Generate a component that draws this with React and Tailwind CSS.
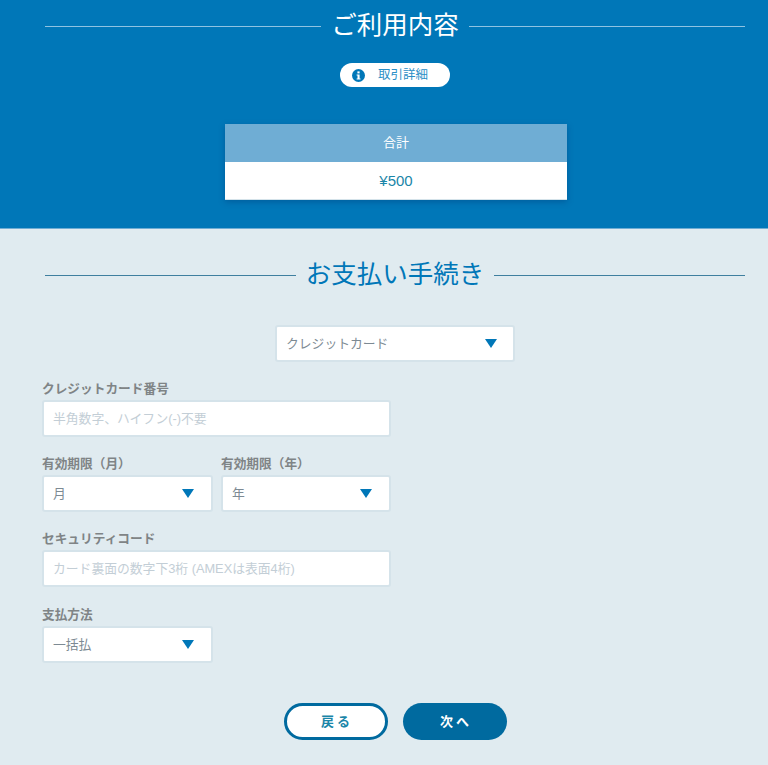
const font = { fontFamily: '"Liberation Sans", "Noto Sans CJK JP", sans-serif' };

function Heading({ text, line, color }) {
  return (
    <div className="flex items-center gap-[10px] ml-[45px] w-[700px]">
      <div className={`flex-1 h-px ${line}`}></div>
      <h2 className={`text-[25.5px] leading-[32px] pb-[2px] font-normal ${color}`}>{text}</h2>
      <div className={`flex-1 h-px ${line}`}></div>
    </div>
  );
}

function Select({ label, className, arrowGap = "pr-[17px]" }) {
  return (
    <div className={`h-[37px] bg-white rounded-[3px] border-2 border-[#d5e3ea] flex items-center justify-between pl-[9px] ${arrowGap} text-[12.8px] text-[#7d8a93] ${className}`}>
      <span>{label}</span>
      <span className="w-0 h-0 border-x-[6px] border-x-transparent border-t-[9px] border-t-[#0077b8]"></span>
    </div>
  );
}

function Input({ placeholder }) {
  return (
    <div className="h-[37px] w-[349px] bg-white rounded-[3px] border-2 border-[#d5e3ea] flex items-center pl-[9px] text-[12.8px] text-[#c3ced6]">
      {placeholder}
    </div>
  );
}

function Label({ children }) {
  return <div className="text-[12.7px] leading-[20px] font-bold text-[#7f8486] mb-[1px]">{children}</div>;
}

export default function App() {
  return (
    <div style={font} className="w-[768px] h-[765px] overflow-hidden bg-[#e0ebf0]">
      {/* ご利用内容 */}
      <section className="h-[229px] bg-[#0077b8] pt-[9px] border-b border-[#6fadd4]">
        <Heading text="ご利用内容" line="bg-[#8fc3e2]" color="text-white" />
        <div className="flex justify-center mt-[20px] ml-[22px]">
          <div className="w-[110px] h-[24px] bg-white rounded-full flex items-center pl-[12px] gap-[13px]">
            <svg width="13" height="13" viewBox="0 0 13 13">
              <circle cx="6.5" cy="6.5" r="6.5" fill="#0077b8" />
              <rect x="5.4" y="2.4" width="2.2" height="2" fill="#fff" />
              <path d="M4.6 5.4h3v4.1h.9v1H4.6v-1h.9V6.4h-.9z" fill="#fff" />
            </svg>
            <span className="text-[12.5px] text-[#2a8fc6]">取引詳細</span>
          </div>
        </div>
        <div className="ml-[225px] mt-[37px] w-[342px] shadow-[0_2px_6px_rgba(0,50,110,0.35)]">
          <div className="h-[38px] bg-[#6fadd4] flex items-center justify-center pb-[1px] text-[13px] text-white">合計</div>
          <div className="h-[38px] bg-white flex items-center justify-center pt-[1px] text-[15px] text-[#1a86a8] border-b border-[#d5e3ea]">¥500</div>
        </div>
      </section>

      {/* お支払い手続き */}
      <section className="pt-[29px]">
        <Heading text="お支払い手続き" line="bg-[#3f7f9f]" color="text-[#0077b8]" />
        <Select label="クレジットカード" arrowGap="pr-[16px]" className="w-[240px] ml-[275px] mt-[33px]" />
        <div className="ml-[42px] w-[349px] mt-[17px]">
          <Label>クレジットカード番号</Label>
          <Input placeholder="半角数字、ハイフン(-)不要" />
          <div className="flex gap-[8px] mt-[17px]">
            <div className="w-[171px]">
              <Label>有効期限（月）</Label>
              <Select label="月" />
            </div>
            <div className="w-[170px]">
              <Label>有効期限（年）</Label>
              <Select label="年" />
            </div>
          </div>
          <div className="mt-[17px]">
            <Label>セキュリティコード</Label>
            <Input placeholder="カード裏面の数字下3桁 (AMEXは表面4桁)" />
          </div>
          <div className="mt-[18px]">
            <Label>支払方法</Label>
            <Select label="一括払" className="w-[171px]" />
          </div>
        </div>
        <div className="flex gap-[15px] ml-[284px] mt-[40px]">
          <button className="w-[104px] h-[37px] rounded-full bg-white border-[3px] border-[#006a9f] pl-[2px] text-[13px] font-bold tracking-[3px] text-[#1a86a8]">戻る</button>
          <button className="w-[104px] h-[37px] rounded-full bg-[#006a9f] pl-[2px] text-[13px] font-bold tracking-[3px] text-white">次へ</button>
        </div>
      </section>
    </div>
  );
}
